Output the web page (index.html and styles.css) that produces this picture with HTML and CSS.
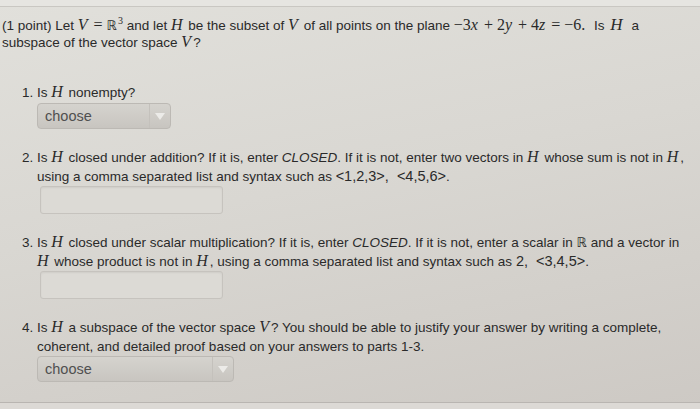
FILE: index.html
```html
<!DOCTYPE html>
<html lang="en">

<head>
    <meta charset="UTF-8">
    <title>Subspace problem</title>
    <link rel="stylesheet" href="styles.css">
</head>

<body>
    <div class="topbar"></div>
    <div class="problem">
        <p class="intro">
            (1 point) Let <span class="mi">V</span><span class="mo">=</span><span class="bb">ℝ</span><sup class="mn">3</sup> and let <span class="mi">H</span> be the subset of <span class="mi">V</span> of all points on the plane
            <span class="math"><span class="mo">−</span>3<span class="mi">x</span><span class="mo">+</span>2<span class="mi">y</span><span class="mo">+</span>4<span class="mi">z</span><span class="mo">=</span>−6.</span> Is <span class="mi wide-mi">H</span> a subspace of the vector space <span class="mi">V</span>?
        </p>
        <ol class="parts">
            <li>
                Is <span class="mi">H</span> nonempty?
                <div class="select narrow"><span class="select-label">choose</span><span class="select-arrow"></span></div>
            </li>
            <li>
                Is <span class="mi">H</span> closed under addition? If it is, enter <em>CLOSED</em>. If it is not, enter two vectors in <span class="mi">H</span> whose sum is not in <span class="mi">H</span>, using a comma separated list and syntax such as <span class="code">&lt;1,2,3&gt;, &lt;4,5,6&gt;</span>.
                <input class="answer" type="text">
            </li>
            <li>
                Is <span class="mi">H</span> closed under scalar multiplication? If it is, enter <em>CLOSED</em>. If it is not, enter a scalar in <span class="bb">ℝ</span> and a vector in <span class="mi">H</span> whose product is not in <span class="mi">H</span>, using a comma separated list and syntax such as <span class="code">2, &lt;3,4,5&gt;</span>.
                <input class="answer" type="text">
            </li>
            <li>
                Is <span class="mi">H</span> a subspace of the vector space <span class="mi">V</span>? You should be able to justify your answer by writing a complete, coherent, and detailed proof based on your answers to parts 1-3.
                <div class="select wide"><span class="select-label">choose</span><span class="select-arrow"></span></div>
            </li>
        </ol>
    </div>
    <div class="bottombar"></div>
</body>

</html>
```

FILE: styles.css
```css
html,
body {
    height: 100%;
}

body {
    margin: 0;
    font-family: 'Liberation Sans', Arial, sans-serif;
    font-size: 13.5px;
    color: #2a2a2a;
    background: linear-gradient(168deg, #e1e0db 0%, #d9d7d2 45%, #cdc9c4 100%);
    display: flex;
    flex-direction: column;
    overflow: hidden;
}

.topbar {
    height: 6px;
    flex: none;
    background: #e6e5e1;
    border-bottom: 1px solid #c9c7c2;
}

.problem {
    flex: 1;
    padding: 9px 7px 0 2px;
}

.intro {
    margin: 0;
    padding-right: 12px;
    line-height: 17px;
}

.mi {
    font-family: 'Liberation Serif', 'Times New Roman', serif;
    font-style: italic;
    font-size: 16px;
    line-height: 1;
    padding-right: 2px;
}

.wide-mi {
    font-size: 17px;
    margin: 0 3px 0 2px;
}

.mo,
.math {
    font-family: 'Liberation Serif', 'Times New Roman', serif;
    font-size: 16px;
    line-height: 1;
}

.math {
    margin-right: 5px;
}

.mo {
    margin: 0 4px;
}

.math > .mo:first-child {
    margin: 0;
}

.bb {
    font-family: 'DejaVu Sans', sans-serif;
    font-size: 13px;
    line-height: 1;
}

.mn {
    font-family: 'Liberation Serif', serif;
    font-size: 10px;
    line-height: 1;
    vertical-align: 6px;
    margin-left: 1px;
}

.parts {
    margin: 32px 0 0 0;
    padding-left: 35px;
    line-height: 19px;
}

.parts li {
    margin-bottom: 19px;
}

.parts em {
    font-style: italic;
}

.code {
    font-size: 14.5px;
    line-height: 1;
    word-spacing: 4px;
}

.select {
    display: flex;
    align-items: center;
    height: 26px;
    box-sizing: border-box;
    border: 1px solid #bcb9b4;
    border-radius: 4px;
    background: linear-gradient(#d5d3ce, #c8c5c0);
    color: #505050;
    font-size: 14.5px;
}

.narrow {
    width: 134px;
    margin-top: 1px;
}

.wide {
    width: 197px;
}

.select-label {
    flex: 1;
    padding-left: 7px;
}

.select-arrow {
    position: relative;
    width: 20px;
    height: 100%;
    border-left: 1px solid #c4c1bc;
}

.select-arrow::after {
    content: "";
    position: absolute;
    left: 5px;
    top: 9px;
    border-left: 5px solid transparent;
    border-right: 5px solid transparent;
    border-top: 7px solid #ecebe8;
}

.answer {
    display: block;
    width: 183px;
    height: 28px;
    box-sizing: border-box;
    margin: 0 0 0 3px;
    border: 1px solid #c6c3be;
    border-radius: 3px;
    background: #dcdad5;
    box-shadow: inset 0 1px 2px rgba(0, 0, 0, 0.06);
}

.bottombar {
    height: 6px;
    flex: none;
    background: #dcd9d5;
    border-top: 1px solid #b9b5b1;
}
```
